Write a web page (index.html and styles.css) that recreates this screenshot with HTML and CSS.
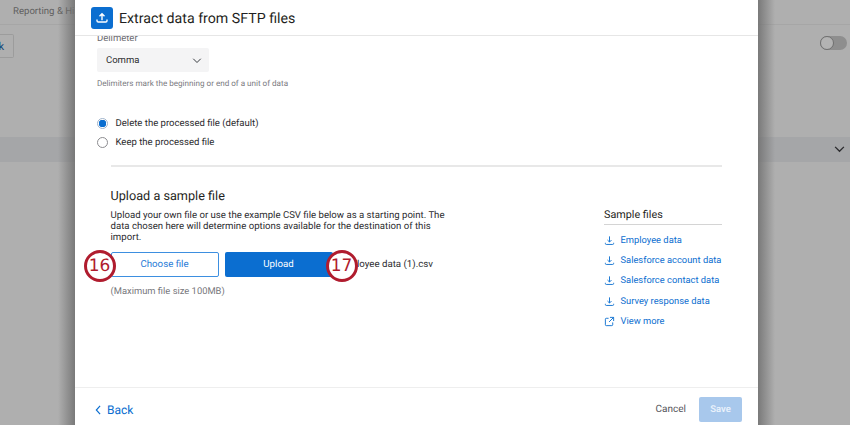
FILE: index.html
```html
<!DOCTYPE html>
<html lang="en">
<head>
<meta charset="utf-8">
<title>Extract data from SFTP files</title>
<link rel="stylesheet" href="styles.css">
</head>
<body>
<div class="page">
  <div class="backdrop">
    <div class="bg-top"><span class="bg-tab">Reporting &amp; History</span></div>
    <div class="bg-tools">
      <span class="bg-button">Back</span>
      <span class="toggle"><span class="knob"></span></span>
    </div>
    <div class="bg-row">
      <svg class="bg-chev" viewBox="0 0 12 8" width="11" height="7"><path d="M1 1l5 5 5-5" fill="none" stroke="#2b2b2e" stroke-width="1.5"/></svg>
    </div>
  </div>
  <div class="shade"></div>
  <section class="modal">
    <header class="modal-head">
      <span class="head-icon">
        <svg viewBox="0 0 22 22" width="22" height="22"><path d="M11 13.2V7M8.5 9.2L11 6.7l2.5 2.5M6 12.5v1.2q0 1.3 1.3 1.3h7.4q1.3 0 1.3-1.3v-1.2" fill="none" stroke="#fff" stroke-width="1.4"/></svg>
      </span>
      <h1>Extract data from SFTP files</h1>
    </header>
    <div class="modal-body">
      <div class="delim">
        <div class="delim-label">Delimeter</div>
        <div class="select">
          <span>Comma</span>
          <svg viewBox="0 0 12 8" width="10" height="6"><path d="M1 1l5 5 5-5" fill="none" stroke="#32363a" stroke-width="1.3"/></svg>
        </div>
        <p class="hint">Delimiters mark the beginning or end of a unit of data</p>
      </div>
      <div class="radios">
        <label class="radio-row"><span class="radio on"></span>Delete the processed file (default)</label>
        <label class="radio-row"><span class="radio"></span>Keep the processed file</label>
      </div>
      <hr class="rule">
      <div class="upload">
        <div class="upload-main">
          <h2>Upload a sample file</h2>
          <p class="intro">Upload your own file or use the example CSV file below as a starting point. The data chosen here will determine options available for the destination of this import.</p>
          <div class="actions">
            <button class="btn-outline">Choose file<span class="badge badge-a">16</span></button>
            <button class="btn-solid">Upload<span class="badge badge-b">17</span></button>
            <span class="filename">Employee data (1).csv</span>
          </div>
          <p class="limit">(Maximum file size 100MB)</p>
        </div>
        <aside class="samples">
          <h3>Sample files</h3>
          <a class="sample"><svg viewBox="0 0 12 12" width="11" height="11"><path d="M6 1.5v6M3.8 5.5L6 7.7l2.200-2.200M1.500 8.500v.8q0 1 1 1h7q1 0 1-1v-.8" fill="none" stroke="#0b6ed0" stroke-width="1"/></svg>Employee data</a>
          <a class="sample"><svg viewBox="0 0 12 12" width="11" height="11"><path d="M6 1.5v6M3.8 5.5L6 7.7l2.200-2.200M1.500 8.500v.8q0 1 1 1h7q1 0 1-1v-.8" fill="none" stroke="#0b6ed0" stroke-width="1"/></svg>Salesforce account data</a>
          <a class="sample"><svg viewBox="0 0 12 12" width="11" height="11"><path d="M6 1.5v6M3.8 5.5L6 7.7l2.200-2.200M1.500 8.500v.8q0 1 1 1h7q1 0 1-1v-.8" fill="none" stroke="#0b6ed0" stroke-width="1"/></svg>Salesforce contact data</a>
          <a class="sample"><svg viewBox="0 0 12 12" width="11" height="11"><path d="M6 1.5v6M3.8 5.5L6 7.7l2.200-2.200M1.500 8.500v.8q0 1 1 1h7q1 0 1-1v-.8" fill="none" stroke="#0b6ed0" stroke-width="1"/></svg>Survey response data</a>
          <a class="sample"><svg viewBox="0 0 12 12" width="11" height="11"><path d="M5 2.500H2.500q-1 0-1 1v6q0 1 1 1h6q1 0 1-1V7M6.500 1.500h4v4M10.500 1.500L5.500 6.500" fill="none" stroke="#0b6ed0" stroke-width="1"/></svg>View more</a>
        </aside>
      </div>
    </div>
    <footer class="modal-foot">
      <a class="back"><svg viewBox="0 0 7 12" width="6" height="10"><path d="M6 1L1.500 6 6 11" fill="none" stroke="#0b6ed0" stroke-width="1.4"/></svg>Back</a>
      <div class="foot-actions">
        <span class="cancel">Cancel</span>
        <button class="save">Save</button>
      </div>
    </footer>
  </section>
</div>
</body>
</html>
```

FILE: styles.css
```css
* { box-sizing: border-box; }
html, body { margin: 0; padding: 0; }
body {
  width: 850px;
  height: 425px;
  overflow: hidden;
  font-family: Roboto, "Open Sans", sans-serif;
  text-rendering: geometricPrecision;
  color: #2b2b2e;
}
.page { position: relative; width: 850px; height: 425px; overflow: hidden; background: #afafaf; }

.backdrop { display: flex; flex-direction: column; height: 100%; }
.bg-top {
  height: 25px;
  padding: 4px 0 0 13px;
  border-bottom: 1px solid #a6a6a6;
  font-size: 9.600px;
  line-height: 16px;
  color: #5f5f5f;
  white-space: nowrap;
}
.bg-tools { display: flex; justify-content: space-between; align-items: flex-start; height: 32px; padding-right: 3px; margin-top: 9px; }
.bg-button {
  display: flex;
  align-items: center;
  justify-content: flex-end;
  width: 14px;
  height: 24px;
  overflow: hidden;
  border: 1px solid #9c9c9c;
  border-left: 0;
  border-radius: 0 2px 2px 0;
  padding-right: 9px;
  font-size: 11px;
  color: #14497c;
}
.toggle { display: block; width: 27px; height: 14px; margin-top: 2px; border-radius: 7px; background: #8e8e8e; }
.knob { display: block; width: 14px; height: 14px; border-radius: 50%; background: #b3b3b3; border: 1px solid #6f6f6f; }
.bg-row {
  display: flex;
  align-items: center;
  justify-content: flex-end;
  height: 25px;
  margin-top: 71px;
  padding-right: 5px;
  background: #a5a6a8;
}

.shade {
  position: absolute;
  top: 0;
  bottom: 0;
  left: 58px;
  width: 717px;
  background: linear-gradient(90deg, rgba(112,112,112,0) 0, rgba(112,112,112,.85) 17px, rgba(112,112,112,.85) 700px, rgba(112,112,112,0) 717px);
}

.modal {
  position: absolute;
  top: 0;
  bottom: 0;
  left: 75px;
  width: 683px;
  display: flex;
  flex-direction: column;
  background: #fff;
}
.modal-head {
  flex: none;
  display: flex;
  align-items: center;
  gap: 6px;
  height: 36px;
  padding: 1px 0 0 16px;
  border-bottom: 1px solid #e6e6e6;
}
.head-icon {
  display: flex;
  align-items: center;
  justify-content: center;
  width: 22px;
  height: 22px;
  border-radius: 3px;
  background: #0b6ed0;
}
.modal-head h1 { margin: 2px 0 0; font-size: 14.200px; line-height: 22px; font-weight: 400; color: #1f1f22; white-space: nowrap; }

.modal-body { flex: 1; min-height: 0; overflow: hidden; padding: 0 36px 0 22px; }
.delim { height: 65px; }
.delim-label { height: 12px; font-size: 9.500px; line-height: 6px; color: #6b6b70; overflow: hidden; }
.select {
  display: flex;
  align-items: center;
  justify-content: space-between;
  width: 112px;
  height: 24px;
  padding: 1px 7px 0 9px;
  border-radius: 2px;
  background: #f4f4f5;
  font-size: 9.500px;
  color: #2b2b2e;
}
.hint { margin: 4px 0 0; font-size: 8.100px; line-height: 14px; color: #7a7a80; white-space: nowrap; }

.radios { display: flex; flex-direction: column; gap: 5.500px; margin-top: 15px; }
.radio-row { display: flex; align-items: center; gap: 7.500px; height: 14px; font-size: 9.550px; color: #2b2b2e; }
.radio { width: 11px; height: 11px; border-radius: 50%; border: 1px solid #8c8c90; background: #fff; flex: none; }
.radio.on { border: 1.500px solid #a0b4cc; background: radial-gradient(circle, #0b6ed0 0 3.500px, #fff 4px); }

.rule { margin: 15.500px 0 0 13.500px; height: 2px; border: 0; background: #e8e8e8; }

.upload { display: flex; justify-content: space-between; padding: 21px 0 0 13.500px; }
.upload-main { width: 345px; }
.upload h2 { margin: 0; font-size: 12.700px; line-height: 17px; font-weight: 400; color: #1f1f22; }
.intro { margin: 5px 0 0; font-size: 9.620px; line-height: 11px; color: #2b2b2e; }
.actions { display: flex; align-items: center; gap: 6px; margin-top: 9px; white-space: nowrap; }
button { font-family: inherit; cursor: pointer; text-rendering: inherit; }
.btn-outline, .btn-solid {
  position: relative;
  width: 108px;
  height: 25px;
  padding: 0;
  border-radius: 2px;
  font-size: 9.700px;
}
.btn-outline { background: #fff; border: 1px solid #3d8fe0; color: #1f7ad6; }
.btn-solid { background: #0b6ed0; border: 0; color: #fff; }
.filename { font-size: 9.700px; color: #2b2b2e; margin-left: -1px; }
.badge {
  position: absolute;
  width: 32px;
  height: 32px;
  display: flex;
  align-items: center;
  justify-content: center;
  border-radius: 50%;
  border: 3px solid #b01c2e;
  background: #fff;
  color: #b01c2e;
  font-family: "DejaVu Sans", sans-serif;
  font-size: 17px;
  z-index: 1;
}
.badge-a { top: -3px; left: -28px; }
.badge-b { top: -2px; left: 101px; }
.limit { margin: 8px 0 0; font-size: 9.400px; line-height: 13px; color: #77777c; }

.samples { width: 118px; margin-top: 19px; }
.samples h3 { margin: 0 0 5px; padding-bottom: 1px; border-bottom: 1px solid #d4d4d4; font-size: 10.800px; line-height: 16px; font-weight: 400; color: #1f1f22; white-space: nowrap; }
.sample { display: flex; align-items: center; gap: 5.500px; height: 20.300px; font-size: 9.350px; color: #0b6ed0; white-space: nowrap; }
.sample svg { flex: none; }

.modal-foot {
  flex: none;
  display: flex;
  align-items: center;
  justify-content: space-between;
  height: 38px;
  padding: 6px 16px 0 20px;
  border-top: 1px solid #eeeeee;
}
.back { display: flex; align-items: center; gap: 6px; font-size: 12px; color: #0b6ed0; }
.foot-actions { display: flex; align-items: center; gap: 13px; }
.cancel { font-size: 10px; color: #55555a; }
.save { width: 43px; height: 25px; padding: 0; border: 0; border-radius: 2px; background: #a8c8ec; color: #e8f1fb; font-size: 9.500px; font-weight: 600; }
```
